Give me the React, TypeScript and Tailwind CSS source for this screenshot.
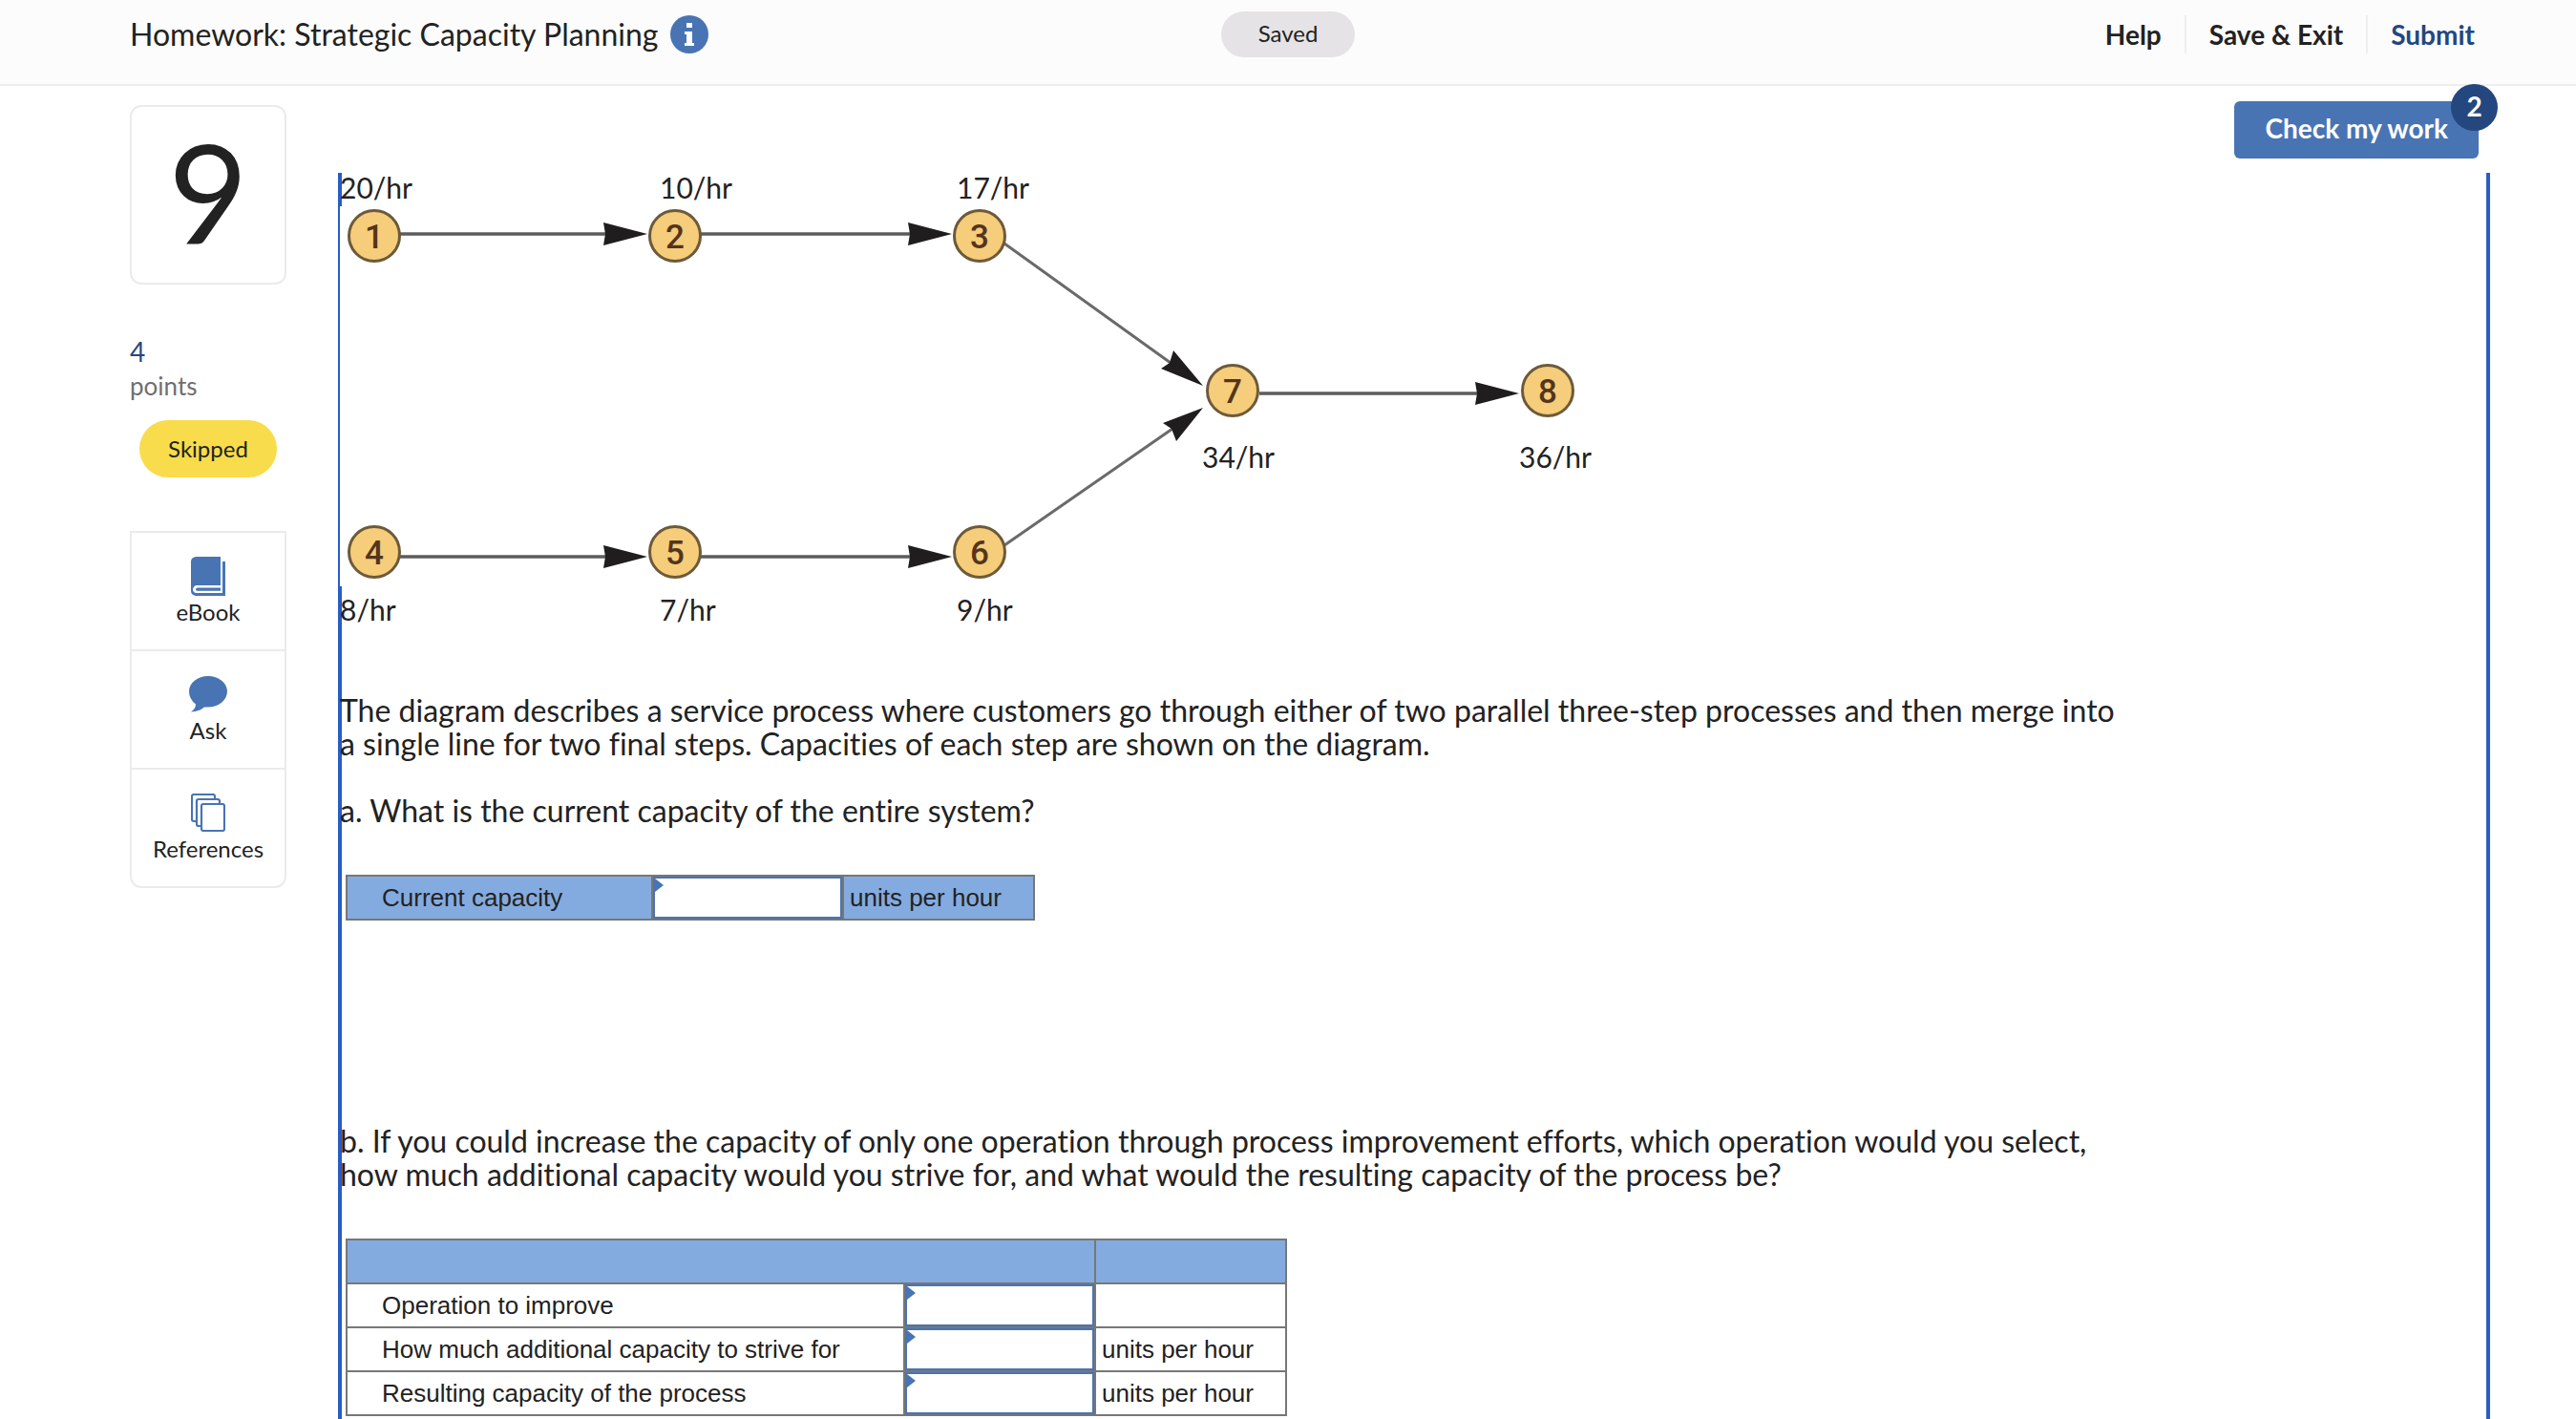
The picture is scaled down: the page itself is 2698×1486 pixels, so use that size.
import type { ReactNode } from 'react';

const nodes = [
    { id: 1, x: 36, y: 66 },
    { id: 2, x: 351, y: 66 },
    { id: 3, x: 670, y: 66 },
    { id: 4, x: 36, y: 397 },
    { id: 5, x: 351, y: 397 },
    { id: 6, x: 670, y: 397 },
    { id: 7, x: 935, y: 228 },
    { id: 8, x: 1265, y: 228 },
];

const rates = [
    { text: '20/hr', x: 0, y: 27 },
    { text: '10/hr', x: 335, y: 27 },
    { text: '17/hr', x: 646, y: 27 },
    { text: '34/hr', x: 903, y: 309 },
    { text: '36/hr', x: 1235, y: 309 },
    { text: '8/hr', x: 0, y: 469 },
    { text: '7/hr', x: 335, y: 469 },
    { text: '9/hr', x: 646, y: 469 },
];

// straight arrows: line start, head tip
const arrows = [
    { from: 63, to: 322, y: 64 },
    { from: 378, to: 641, y: 64 },
    { from: 63, to: 322, y: 402 },
    { from: 378, to: 641, y: 402 },
    { from: 963, to: 1235, y: 231 },
];

function ProcessDiagram() {
    return (
        <svg width="1320" height="484" viewBox="0 0 1320 484" className="block overflow-visible" role="img" aria-label="Process flow diagram">
            <rect x="0" y="35" width="1320" height="398" fill="#fff" />
            {arrows.map((a) => (
                <g key={`${a.from}-${a.y}`}>
                    <path d={`M${a.from} ${a.y}H${a.to - 30}`} stroke="#5c5c5c" strokeWidth="3.5" />
                    <path d={`M${a.to} ${a.y}l-46 -12 2 12 -2 12z`} fill="#1f1d1e" />
                </g>
            ))}
            <path d="M696 74L870 199M696 390L872 268" stroke="#6a6a6a" strokeWidth="3" />
            <path d="M904 223L873 186L869 199L860 205Z" fill="#1f1d1e" />
            <path d="M904 246L876 281L871 268L862 262Z" fill="#1f1d1e" />
            {nodes.map((n) => (
                <g key={n.id}>
                    <circle cx={n.x} cy={n.y} r="26.5" fill="#f5cd7b" stroke="#6d5a3a" strokeWidth="3" />
                    <text x={n.x} y={n.y + 13} textAnchor="middle" fill="#54351c" className="font-['Roboto',sans-serif] text-[35px] font-medium">
                        {n.id}
                    </text>
                </g>
            ))}
            {rates.map((r) => (
                <text key={r.text} x={r.x} y={r.y} fill="#222" className="text-[30px]">
                    {r.text}
                </text>
            ))}
        </svg>
    );
}

function InfoIcon() {
    return (
        <svg width="40" height="40" viewBox="0 0 40 40" aria-hidden="true">
            <circle cx="20" cy="20" r="20" fill="#4874b4" />
            <path d="M17 8h6v5h-6zM15 17h8v12h2v3H15v-3h2v-9h-2z" fill="#fff" />
        </svg>
    );
}

function BookIcon() {
    return (
        <svg width="36" height="41" viewBox="0 0 36 41" aria-hidden="true">
            <path d="M5 0H31V30H6Q3 30 2 34Q2 38 6 38H33V5H36V41H5Q0 40 0 36V5Q0 1 5 0Z" fill="#4874b4" />
            <path d="M31 32.500H7Q5 32.500 5 34.200Q5 35.800 7 35.800H31" fill="#4874b4" />
        </svg>
    );
}

function AskIcon() {
    return (
        <svg width="40" height="38" viewBox="0 0 40 38" aria-hidden="true">
            <path d="M20 0C31 0 40 7 40 16S31 32.500 20 32.500L16 32.500Q11 37 2 37.500Q7 34 7 29.500Q0 24 0 16C0 7 9 0 20 0Z" fill="#4874b4" />
        </svg>
    );
}

function ReferencesIcon() {
    return (
        <svg width="36" height="40" viewBox="0 0 36 40" fill="#fff" stroke="#4874b4" strokeWidth="2.2" aria-hidden="true">
            <rect x="1" y="1" width="24" height="28" rx="2" />
            <rect x="6" y="6" width="24" height="28" rx="2" />
            <rect x="11" y="11" width="24" height="28" rx="2" />
        </svg>
    );
}

function ToolButton({ icon, label }: { icon: ReactNode; label: string }) {
    return (
        <button className="flex h-[124px] w-full flex-col items-center pt-[23px] text-[24px] leading-8 last:h-[122px]">
            <span className="flex h-11 items-center">{icon}</span>
            {label}
        </button>
    );
}

function AnswerCell({ label }: { label: string }) {
    return (
        <td className="relative border-2 border-[#777] bg-white p-0">
            <input aria-label={label} className="block h-11 w-full border-2 border-[#4874b4] bg-white px-3 outline-none" />
            <svg width="12" height="14" viewBox="0 0 12 14" className="absolute top-0.5 left-0" aria-hidden="true">
                <path d="M0 0H2L11 7L2 14H0Z" fill="#4874b4" />
            </svg>
        </td>
    );
}

const answerRows = [
    { label: 'Operation to improve', unit: '' },
    { label: 'How much additional capacity to strive for', unit: 'units per hour' },
    { label: 'Resulting capacity of the process', unit: 'units per hour' },
];

export default function App() {
    return (
        <div className="bg-white font-['Lato','Open_Sans',sans-serif] text-[#222] [font-variant-ligatures:no-common-ligatures]">
            {/* Header */}
            <header className="grid h-[90px] grid-cols-[1fr_auto_1fr] items-start border-b-2 border-[#eee] bg-[#fcfcfc]">
                <div className="flex items-center gap-3 pt-4 pl-[136px]">
                    <h1 className="text-[32px] leading-9">Homework: Strategic Capacity Planning</h1>
                    <button aria-label="Assignment information">
                        <InfoIcon />
                    </button>
                </div>
                <span className="mt-3 flex h-12 w-[140px] items-center justify-center rounded-full bg-[#e5e3e6] pb-0.5 text-[24px] leading-8">Saved</span>
                <nav className="flex items-center justify-end gap-6 pt-4 pr-[106px] text-[28px] leading-9 font-bold">
                    <a href="#help">Help</a>
                    <span className="h-10 w-0.5 bg-[#eee]" />
                    <a href="#save">Save &amp; Exit</a>
                    <span className="h-10 w-0.5 bg-[#eee]" />
                    <a href="#submit" className="text-[#24477f]">Submit</a>
                </nav>
            </header>

            <div className="flex pr-[90px] pl-[136px]">
                {/* Question sidebar */}
                <aside className="w-[164px] shrink-0 pt-5">
                    <div className="flex h-[188px] items-center justify-center rounded-xl border-2 border-[#ebebeb] pb-2 text-[144px] leading-none">9</div>
                    <div className="mt-[52px] text-[28px] leading-9 text-[#24477f]">4</div>
                    <div className="text-[26px] leading-9 text-[#6f6f6f]">points</div>
                    <div className="mx-auto mt-[18px] flex h-[60px] w-36 items-center justify-center rounded-full bg-[#f8dc4b] text-[24px] leading-8">Skipped</div>
                    <div className="mt-14 divide-y-2 divide-[#ebebeb] rounded-b-xl border-2 border-[#ebebeb]">
                        <ToolButton icon={<BookIcon />} label="eBook" />
                        <ToolButton icon={<AskIcon />} label="Ask" />
                        <ToolButton icon={<ReferencesIcon />} label="References" />
                    </div>
                </aside>

                {/* Question body */}
                <main className="ml-[54px] min-w-0 flex-1 pt-4">
                    <div className="flex justify-end pr-3">
                        <button className="relative h-[60px] rounded-md bg-[#4874b4] px-8 pb-1 text-[28px] leading-8 font-bold text-white">
                            Check my work
                            <span className="absolute -top-[18px] -right-5 flex size-[49px] items-center justify-center rounded-full bg-[#24477f] pb-1">2</span>
                        </button>
                    </div>

                    <section className="mt-[15px] border-x-4 border-[#275dc5] pb-1 text-[32px] leading-[35px]">
                        <div className="relative -ml-0.5">
                            <ProcessDiagram />

                            <p className="pt-[61px]">
                                The diagram describes a service process where customers go through either of two parallel three-step processes and then merge into
                                <br />
                                a single line for two final steps. Capacities of each step are shown on the diagram.
                            </p>
                            <p className="mt-[35px]">a. What is the current capacity of the entire system?</p>

                            <table className="mt-[50px] ml-1.5 w-[722px] table-fixed border-collapse bg-[#84abe0] font-['Liberation_Sans',Arial,sans-serif] text-[26px] leading-8">
                                <colgroup>
                                    <col className="w-80" />
                                    <col className="w-[200px]" />
                                    <col />
                                </colgroup>
                                <tbody>
                                    <tr>
                                        <th scope="row" className="border-2 border-[#777] py-0 pl-9 text-left font-normal">Current capacity</th>
                                        <AnswerCell label="Current capacity" />
                                        <td className="border-2 border-[#777] py-0 pl-1.5">units per hour</td>
                                    </tr>
                                </tbody>
                            </table>

                            <p className="mt-[213px]">
                                b. If you could increase the capacity of only one operation through process improvement efforts, which operation would you select,
                                <br />
                                how much additional capacity would you strive for, and what would the resulting capacity of the process be?
                            </p>

                            <table className="mt-[50px] ml-1.5 w-[986px] table-fixed border-collapse font-['Liberation_Sans',Arial,sans-serif] text-[26px] leading-8">
                                <colgroup>
                                    <col className="w-[584px]" />
                                    <col className="w-[200px]" />
                                    <col />
                                </colgroup>
                                <thead>
                                    <tr className="h-[46px] bg-[#84abe0]">
                                        <th colSpan={2} className="border-2 border-[#777]" />
                                        <th className="border-2 border-[#777]" />
                                    </tr>
                                </thead>
                                <tbody>
                                    {answerRows.map((row) => (
                                        <tr key={row.label}>
                                            <th scope="row" className="border-2 border-[#777] py-0 pl-9 text-left font-normal">{row.label}</th>
                                            <AnswerCell label={row.label} />
                                            <td className="border-2 border-[#777] py-0 pl-1.5">{row.unit}</td>
                                        </tr>
                                    ))}
                                </tbody>
                            </table>
                        </div>
                    </section>
                </main>
            </div>
        </div>
    );
}
